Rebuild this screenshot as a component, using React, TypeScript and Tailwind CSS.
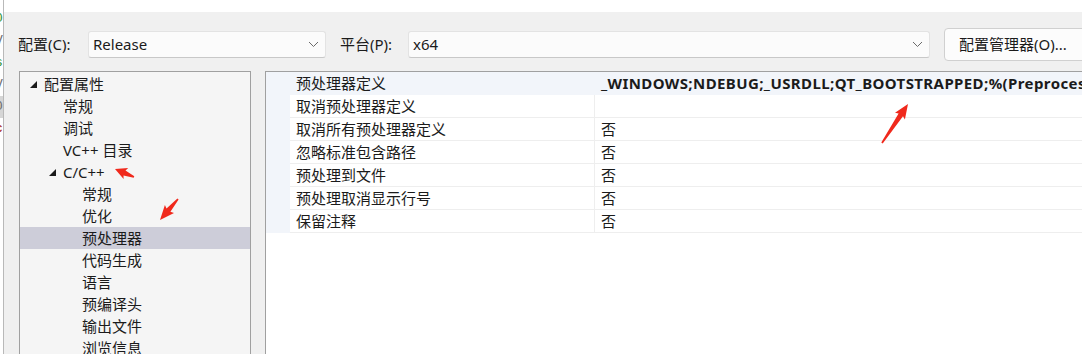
const cjk = '"Noto Sans", "Noto Sans CJK SC", sans-serif';

type Node = { label: string; level: number; open?: boolean; selected?: boolean };

const tree: Node[] = [
  { label: "配置属性", level: 0, open: true },
  { label: "常规", level: 1 },
  { label: "调试", level: 1 },
  { label: "VC++ 目录", level: 1 },
  { label: "C/C++", level: 1, open: true },
  { label: "常规", level: 2 },
  { label: "优化", level: 2 },
  { label: "预处理器", level: 2, selected: true },
  { label: "代码生成", level: 2 },
  { label: "语言", level: 2 },
  { label: "预编译头", level: 2 },
  { label: "输出文件", level: 2 },
  { label: "浏览信息", level: 2 },
];

const props: [string, string][] = [
  ["预处理器定义", "_WINDOWS;NDEBUG;_USRDLL;QT_BOOTSTRAPPED;%(PreprocessorDefinitions)"],
  ["取消预处理器定义", ""],
  ["取消所有预处理器定义", "否"],
  ["忽略标准包含路径", "否"],
  ["预处理到文件", "否"],
  ["预处理取消显示行号", "否"],
  ["保留注释", "否"],
];

function Chevron() {
  return (
    <svg width="11" height="7" viewBox="0 0 11 7" className="shrink-0">
      <path d="M1 1 L5.5 5.5 L10 1" fill="none" stroke="#6b6b6b" strokeWidth="1" />
    </svg>
  );
}

function Expander() {
  return (
    <svg width="7" height="7" viewBox="0 0 7 7" className="shrink-0">
      <polygon points="7,0 7,7 0,7" fill="#1a1a1a" />
    </svg>
  );
}

// tapered red annotation arrow, tail -> head
function arrowPoints(x1: number, y1: number, x2: number, y2: number) {
  const dx = x2 - x1;
  const dy = y2 - y1;
  const len = Math.hypot(dx, dy);
  const ux = dx / len;
  const uy = dy / len;
  const nx = -uy;
  const ny = ux;
  const headLen = Math.min(13, len * 0.5);
  const bx = x2 - ux * headLen;
  const by = y2 - uy * headLen;
  const p = (x: number, y: number) => `${x.toFixed(1)},${y.toFixed(1)}`;
  return [
    p(x1 + nx * 0.8, y1 + ny * 0.8),
    p(bx + nx * 2.6, by + ny * 2.6),
    p(bx - ux * 1.5 + nx * 6, by - uy * 1.5 + ny * 6),
    p(x2, y2),
    p(bx - ux * 1.5 - nx * 6, by - uy * 1.5 - ny * 6),
    p(bx - nx * 2.6, by - ny * 2.6),
    p(x1 - nx * 0.8, y1 - ny * 0.8),
  ].join(" ");
}

export default function App() {
  return (
    <div
      className="relative w-[1082px] h-[354px] overflow-hidden flex bg-white text-[#1b1b1b]"
      style={{ fontFamily: cjk }}
    >
      {/* sliver of the editor behind the dialog */}
      <div className="w-[4px] shrink-0 bg-white border-r border-[#b9b9b9] overflow-hidden flex flex-col text-[13px] leading-[22px] font-mono">
        <span className="text-[#2f8f2f] mt-[8px] -ml-[5px]">0</span>
        <span className="text-[#6b6b6b] -ml-[5px]">V</span>
        <span className="text-[#2f8f2f] -ml-[5px]">s</span>
        <span className="text-[#6b6b6b] -ml-[5px]">V</span>
        <span className="text-[#6b6b6b] bg-[#d6d6d6] -ml-[5px]">0</span>
        <span className="text-[#a31515] -ml-[5px]">c</span>
      </div>

      <div className="flex-1 flex flex-col min-w-0">
        <div className="h-[12px] bg-white shrink-0" />

        <div className="flex-1 bg-[#f0f0f0] flex flex-col min-h-0">
          {/* toolbar */}
          <div className="flex items-center h-[33px] mt-[16px] pl-[14px] text-[15px] whitespace-nowrap">
            <span className="w-[70px] shrink-0">配置(C):</span>
            <div className="w-[238px] h-[27px] shrink-0 bg-[#fbfbfb] border border-[#e3e3e3] border-b-[#c8c8c8] rounded-[3px] flex items-center justify-between pl-[4px] pr-[6px]">
              <span>Release</span>
              <Chevron />
            </div>
            <span className="ml-[14px] w-[68px] shrink-0">平台(P):</span>
            <div className="w-[522px] h-[27px] shrink-0 bg-[#fbfbfb] border border-[#e3e3e3] border-b-[#c8c8c8] rounded-[3px] flex items-center justify-between pl-[4px] pr-[6px]">
              <span>x64</span>
              <Chevron />
            </div>
            <div className="ml-[14px] w-[160px] h-[33px] shrink-0 bg-[#fcfcfc] border border-[#d0d0d0] rounded-[4px] flex items-center pl-[14px]">
              配置管理器(O)...
            </div>
          </div>

          {/* panels */}
          <div className="flex gap-[14px] pl-[15px] mt-[10px] flex-1 min-h-0">
            <div className="w-[232px] shrink-0 bg-[#f5f5f5] border border-[#a0a0a0] border-b-0 pt-[1px] text-[15px]">
              {tree.map((n, i) => (
                <div
                  key={i}
                  className={`h-[22px] flex items-center whitespace-nowrap ${n.selected ? "bg-[#cdcdd9]" : ""}`}
                >
                  {n.level === 0 && (
                    <>
                      <span className="w-[10px]" />
                      <Expander />
                      <span className="w-[7px]" />
                    </>
                  )}
                  {n.level === 1 && n.open && (
                    <>
                      <span className="w-[29px]" />
                      <Expander />
                      <span className="w-[7px]" />
                    </>
                  )}
                  {n.level === 1 && !n.open && <span className="w-[43px]" />}
                  {n.level === 2 && <span className="w-[62px]" />}
                  <span>{n.label}</span>
                </div>
              ))}
            </div>

            <div className="flex-1 bg-white border border-[#a0a0a0] border-r-0 border-b-0 text-[15px] min-w-0 overflow-hidden">
              {props.map(([name, value], i) => (
                <div
                  key={i}
                  className={`h-[23px] flex whitespace-nowrap ${i === 0 ? "bg-[#f2f5fa]" : ""}`}
                >
                  <div className="w-[24px] shrink-0 bg-[#f2f5fa]" />
                  <div
                    className={`w-[304px] shrink-0 flex items-center pl-[6px] border-b ${i === 0 ? "border-[#f2f5fa]" : "border-[#eeeeee]"}`}
                  >
                    {name}
                  </div>
                  <div
                    className={`flex-1 flex items-center pl-[6px] border-l border-b ${i === 0 ? "border-[#f2f5fa] font-bold tracking-[0.4px]" : "border-[#eeeeee]"}`}
                  >
                    {value}
                  </div>
                </div>
              ))}
            </div>
          </div>
        </div>
      </div>

      {/* red annotation arrows drawn over the screenshot */}
      <svg className="absolute inset-0 pointer-events-none" width="1082" height="354">
        <polygon points={arrowPoints(882, 143, 908, 104)} fill="#f0291c" />
        <polygon points={arrowPoints(134, 177, 115, 169)} fill="#f0291c" />
        <polygon points={arrowPoints(178, 199, 160, 220)} fill="#f0291c" />
      </svg>
    </div>
  );
}
